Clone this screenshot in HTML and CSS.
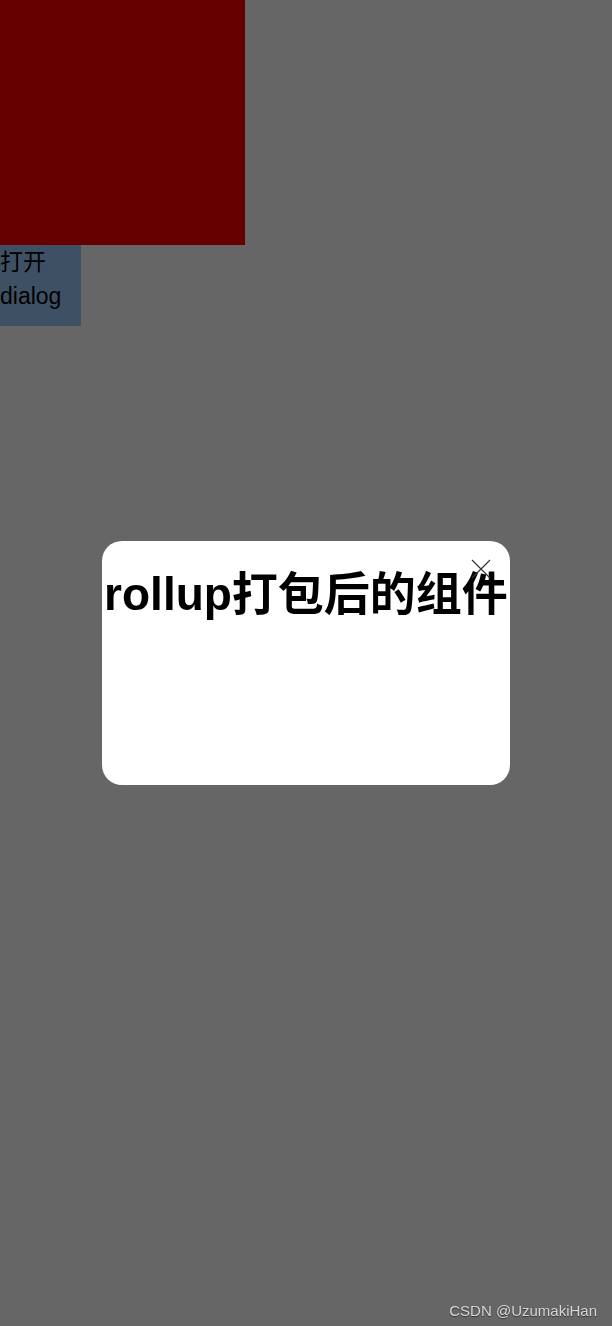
FILE: index.html
```html
<!DOCTYPE html>
<html lang="zh-CN">
<head>
  <meta charset="UTF-8" />
  <meta name="viewport" content="width=device-width, initial-scale=1.0"/>
  <title>rollup dialog demo</title>
  <link rel="stylesheet" href="styles.css">
</head>
<body>

  <div class="box"></div>
  <div class="open-btn">打开 dialog</div>

  <div class="mask">
    <div class="dialog">
      <span class="close">
        <svg width="22" height="22" viewBox="0 0 22 22">
          <path d="M2 2 L20 20 M20 2 L2 20" stroke="#333" stroke-width="1.2" fill="none"/>
        </svg>
      </span>
      <h1 class="title">rollup打包后的组件</h1>
    </div>
  </div>

  <div class="mark">CSDN @UzumakiHan</div>

</body>
</html>
```

FILE: styles.css
```css
body {
  margin: 0;
  font-family: 'Liberation Sans', Arial, 'Noto Sans CJK SC', sans-serif;
  font-size: 23px;
  background: #fff;
}

.box {
  width: 245px;
  height: 245px;
  background: #ff0000;
}

.open-btn {
  width: 81px;
  height: 81px;
  background: #9bcbf9;
  color: #000;
  line-height: 34px;
}

.mask {
  position: fixed;
  inset: 0;
  background: rgba(0, 0, 0, 0.6);
  display: flex;
  align-items: center;
  justify-content: center;
}

.dialog {
  position: relative;
  width: 408px;
  height: 244px;
  background: #fff;
  border-radius: 20px;
  padding-top: 26px;
  box-sizing: border-box;
}

.title {
  margin: 0;
  font-size: 46px;
  line-height: 54px;
  text-align: center;
  white-space: nowrap;
}

.close {
  position: absolute;
  top: 17px;
  right: 18px;
  width: 22px;
  height: 22px;
  z-index: 1;
}

.mark {
  position: fixed;
  right: 15px;
  bottom: 7px;
  font-size: 15px;
  color: #d6d6d6;
  text-shadow: 0 1px 1px rgba(0, 0, 0, 0.5);
}
```
